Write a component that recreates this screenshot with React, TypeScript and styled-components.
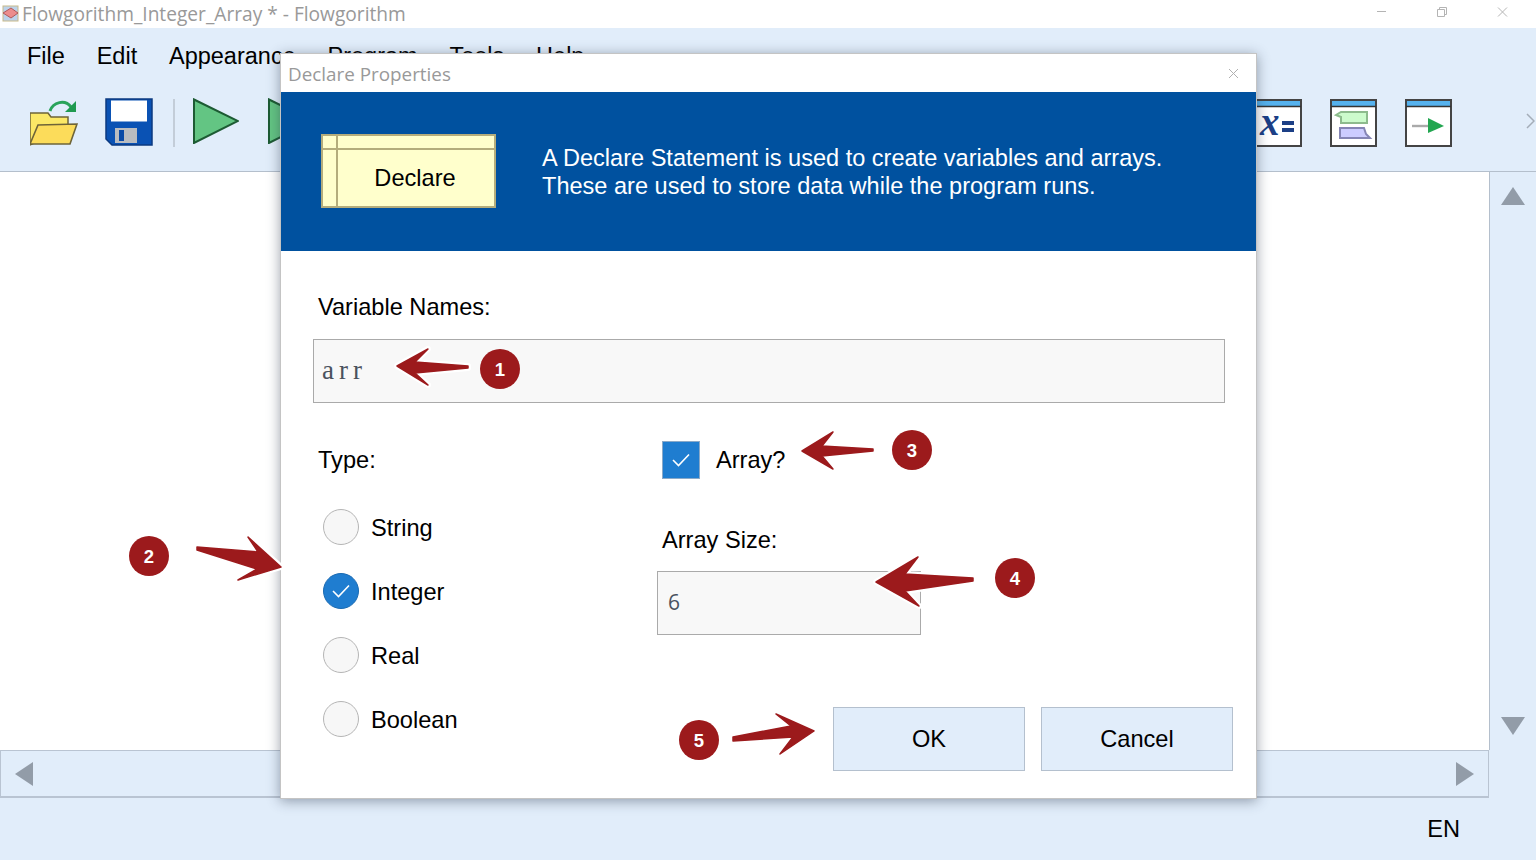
import React from "react";
import styled, { createGlobalStyle } from "styled-components";

const Global = createGlobalStyle`
  html, body { margin: 0; padding: 0; width: 1536px; height: 860px; overflow: hidden; background: #e1edfa; }
  * { box-sizing: border-box; }
  #root { width: 1536px; height: 860px; }
`;

const sans = `"Liberation Sans", Arial, sans-serif`;
const segoe = `"Open Sans", "Noto Sans", sans-serif`;

const Page = styled.div`
  position: relative; width: 1536px; height: 860px; display: flex; flex-direction: column;
  background: #e1edfa; font-family: ${sans}; color: #000; overflow: hidden;
`;
const TitleBar = styled.header`
  height: 28px; background: #fff; display: flex; align-items: center; padding-left: 2px;
`;
const AppTitle = styled.span`
  font-family: ${segoe}; font-size: 19.15px; color: #999; margin: 0 0 0 2px; white-space: nowrap;
`;
const WindowControls = styled.div`
  margin-left: auto; display: flex; align-items: center; gap: 50px; padding: 0 28px 4px 0;
`;
const MenuBar = styled.nav`
  height: 56px; display: flex; align-items: center; gap: 31.8px; padding-left: 27px;
`;
const MenuItem = styled.span`font-size: 23.5px;`;
const Toolbar = styled.div`
  height: 88px; border-bottom: 1px solid #b4bfcc; display: flex; align-items: flex-start; padding: 14px 0 0 30px;
`;
const ToolGroup = styled.div`display: flex; align-items: flex-start; gap: ${(p: { $gap: number }) => p.$gap}px;`;
const ToolDivider = styled.div`width: 2px; height: 48px; margin: 1px 18px 0 20px; background: #c3cdd8;`;
const RightTools = styled.div`margin-left: auto; display: flex; align-items: flex-start; gap: 28px; padding-top: 1px;`;
const ToolChevron = styled.div`margin: 14px 0 0 46px; padding-right: 1px;`;
const Work = styled.main`flex: 1; display: flex; min-height: 0;`;
const Canvas = styled.div`flex: 1; background: #fff;`;
const VScroll = styled.aside`
  width: 47px; border-left: 1px solid #b4bfcc; display: flex; flex-direction: column; justify-content: space-between; align-items: center; padding: 15px 0 15px;
`;
const HScroll = styled.div`
  width: 1489px; height: 48px; border: 1px solid #b9c4d2; border-width: 1px 1px 2px 1px; display: flex; align-items: center; justify-content: space-between; padding: 0 14px;
`;
const StatusBar = styled.footer`
  height: 62px; display: flex; justify-content: flex-end; align-items: center; padding: 0 76px 0 0; font-size: 23.6px;
`;

const Dialog = styled.section`
  position: absolute; left: 281px; top: 54px; width: 975px; height: 744px; background: #fff;
  box-shadow: 0 0 0 1px #c4c4c4, 0 2px 12px 1px rgba(40, 50, 70, .45);
  display: flex; flex-direction: column;
`;
const DialogTitle = styled.div`
  height: 38px; display: flex; align-items: center; justify-content: space-between; padding: 1px 17px 0 7px;
  font-family: ${segoe}; font-size: 18.85px; color: #999;
`;
const Banner = styled.div`
  height: 159px; background: #00519f; display: flex; align-items: center; padding-left: 40px; gap: 46px; color: #fff;
`;
const DeclareShape = styled.div`
  position: relative; width: 175px; height: 74px; margin-top: -1px; flex: none; background: #ffffcc; border: 2px solid #b4ad7c;
  color: #000; font-size: 23.6px; display: flex; align-items: center; justify-content: center; padding: 14px 0 0 13px;
  &::before { content: ""; position: absolute; left: 13px; top: 0; bottom: 0; width: 2px; background: #b4ad7c; }
  &::after { content: ""; position: absolute; left: 0; right: 0; top: 12px; height: 2px; background: #b4ad7c; }
`;
const BannerText = styled.p`margin: 0; font-size: 23.56px; line-height: 28px; white-space: nowrap;`;
const Form = styled.div`flex: 1; padding: 42px 0 0 32px; display: flex; flex-direction: column;`;
const FieldLabel = styled.label`display: block; font-size: 23.6px; line-height: 28px; padding-left: 5px;`;
const NamesInput = styled.div`
  width: 912px; height: 64px; margin-top: 18px; background: #f8f8f8; border: 1px solid #aaa; display: flex; align-items: center;
  padding: 0 8px 1px; font-family: "Liberation Serif", serif; font-size: 27px; letter-spacing: 5px; color: #4a525e;
`;
const Columns = styled.div`display: flex;`;
const LeftCol = styled.div`width: 344px; padding-top: 43px;`;
const RightCol = styled.div`width: 576px; padding-top: 38px;`;
const RadioRow = styled.div`height: 64px; display: flex; align-items: center; gap: 12px; padding-left: 10px; font-size: 23.6px;`;
const RadioText = styled.span`padding-top: 2px;`;
const RadioList = styled.div`margin-top: 21px;`;
const Radio = styled.span<{ $on?: boolean }>`
  width: 36px; height: 36px; border-radius: 50%; display: flex; align-items: center; justify-content: center; flex: none;
  background: ${(p) => (p.$on ? "#1f7dd0" : "#f7f7f7")}; border: 1px solid ${(p) => (p.$on ? "#1a6ab2" : "#b5b5b5")};
`;
const CheckRow = styled.div`display: flex; align-items: center; gap: 16px; padding-left: 5px; font-size: 23.6px;`;
const CheckBox = styled.span`
  width: 38px; height: 38px; background: #1f7dd0; border: 1px solid #8aa9c8; display: flex; align-items: center; justify-content: center;
`;
const SizeLabel = styled(FieldLabel)`margin-top: 47px;`;
const SizeInput = styled.div`
  width: 264px; height: 64px; margin-top: 17px; background: #f8f8f8; border: 1px solid #aaa; display: flex; align-items: center;
  padding: 0 10px 3px; font-family: ${segoe}; font-size: 21px; color: #4a525e;
`;
const Buttons = styled.div`display: flex; justify-content: flex-end; gap: 16px; margin-top: 72px;`;
const Button = styled.button`
  width: 192px; height: 64px; background: #e1edfa; border: 1px solid #b4c0ce; font-family: ${sans}; font-size: 23.6px; color: #000; padding: 0;
`;

const Arrows = styled.svg`position: absolute; left: 0; top: 0; width: 1536px; height: 860px; pointer-events: none;`;
const Badge = styled.span<{ $x: number; $y: number }>`
  position: absolute; left: ${(p) => p.$x - 20}px; top: ${(p) => p.$y - 20}px; width: 40px; height: 40px; border-radius: 50%; padding-top: 1px;
  background: #9c1a1c; color: #fff; font-weight: 700; font-size: 18.5px; display: flex; align-items: center; justify-content: center;
`;

const Glyph = styled.svg`display: block; flex: none;`;

const Check = () => (
  <Glyph width="20" height="16" viewBox="0 0 20 16" fill="none" stroke="#fff" strokeWidth="1.6">
    <path d="M2 8l5.5 5.5L18 2.5" />
  </Glyph>
);

const Triangle = ({ dir }: { dir: "up" | "down" | "left" | "right" }) => {
  const horizontal = dir === "left" || dir === "right";
  const pts = { up: "12,0 24,18 0,18", down: "0,0 24,0 12,18", left: "18,0 18,24 0,12", right: "0,0 18,12 0,24" }[dir];
  return (
    <Glyph width={horizontal ? 18 : 24} height={horizontal ? 24 : 18}>
      <polygon points={pts} fill="#929ca8" />
    </Glyph>
  );
};

const WinIcon = ({ children }: { children?: React.ReactNode }) => (
  <Glyph width="47" height="48" viewBox="0 0 47 48">
    <rect x="1" y="1" width="45" height="46" fill="#fff" stroke="#444" strokeWidth="2" />
    <rect x="2" y="2" width="43" height="5" fill="#55b2ee" />
    <line x1="1" x2="46" y1="7.5" y2="7.5" stroke="#333" strokeWidth="1.4" />
    {children}
  </Glyph>
);

const Play = () => (
  <Glyph width="46" height="46" viewBox="0 0 46 46">
    <polygon points="1,1.5 45,23 1,45" fill="#63c583" stroke="#1d5b33" strokeWidth="2" />
  </Glyph>
);

const arrowPts = [
  "397,366 428,349 415,362 468,366 468,368 415,373 428,385",
  "197,547 258,552 248,537 281,567 238,580 257,569 197,550",
  "802,451 833,432 822,446 873,449 873,451 822,456 833,469",
  "876,582 918,557 905,574 973,578 973,581 905,591 919,606",
  "733,737 791,726 776,714 814,731 780,754 793,737 733,741",
];

export default function App() {
  return (
    <Page>
      <Global />
      <TitleBar>
        <Glyph width="18" height="18" viewBox="0 0 18 18">
          <rect x="1" y="1" width="15" height="15" fill="#bcd2ea" stroke="#c8b98a" />
          <polygon points="1,8 9,3 16,8 9,13" fill="#ec8d8d" stroke="#b05a5a" />
        </Glyph>
        <AppTitle>Flowgorithm_Integer_Array * - Flowgorithm</AppTitle>
        <WindowControls>
          <Glyph width="11" height="10" stroke="#b4b4b4" fill="none"><path d="M1 4.5h9" /></Glyph>
          <Glyph width="10" height="10" stroke="#b4b4b4" fill="none"><path d="M2.5 2.5v-2h7v7h-2M.5 2.5h7v7h-7z" /></Glyph>
          <Glyph width="11" height="10" stroke="#b4b4b4" fill="none"><path d="M1 .5l9 9M10 .5l-9 9" /></Glyph>
        </WindowControls>
      </TitleBar>
      <MenuBar>
        {["File", "Edit", "Appearance", "Program", "Tools", "Help"].map((m) => (
          <MenuItem key={m}>{m}</MenuItem>
        ))}
      </MenuBar>
      <Toolbar>
        <ToolGroup $gap={27}>
          <Glyph width="48" height="48" viewBox="0 0 48 48">
            <polygon points="0,15 18,15 21,19 38,19 38,30 0,47" fill="#fbe866" stroke="#6e6438" strokeWidth="1.5" />
            <polygon points="8,27 47,26 40,46 0,46" fill="#fcdc5a" stroke="#6e6438" strokeWidth="1.6" />
            <path d="M20 13C23 4 35 1 41 9" fill="none" stroke="#29a35a" strokeWidth="3" />
            <polygon points="46,3 46,14 35,14" fill="#1f9a50" />
          </Glyph>
          <Glyph width="48" height="48" viewBox="0 0 48 48">
            <polygon points="1,1 47,1 47,47 7,47 1,41" fill="#0a52b4" stroke="#0b3a80" strokeWidth="1.5" />
            <rect x="6" y="2.5" width="36" height="21" fill="#fff" />
            <rect x="10" y="30" width="22" height="15" fill="#b9bcc0" />
            <rect x="14" y="32" width="5" height="11" fill="#0a4aa6" />
          </Glyph>
        </ToolGroup>
        <ToolDivider />
        <ToolGroup $gap={29}>
          <Play />
          <Play />
        </ToolGroup>
        <RightTools>
          <WinIcon>
            <text x="5" y="36" fontFamily="Liberation Serif, serif" fontStyle="italic" fontWeight="700" fontSize="39" fill="#1c3f86">x</text>
            <rect x="27" y="22" width="12" height="4" fill="#1c3f86" />
            <rect x="27" y="29" width="12" height="4" fill="#1c3f86" />
          </WinIcon>
          <WinIcon>
            <polygon points="11,13 37,13 37,24 11,24 11,18 6,16" fill="#ccfbcc" stroke="#8dbb8d" strokeWidth="2" />
            <polygon points="10,29 34,29 36,35 40,39 10,39" fill="#ccccff" stroke="#8585b5" strokeWidth="2" />
          </WinIcon>
          <WinIcon>
            <line x1="7" x2="24" y1="27" y2="27" stroke="#aaa" strokeWidth="2.4" />
            <polygon points="23,19 39,27 23,34" fill="#22a650" />
          </WinIcon>
          <ToolChevron>
            <Glyph width="9" height="16" fill="none" stroke="#a4adb8" strokeWidth="1.5"><path d="M1 1l7 7-7 7" /></Glyph>
          </ToolChevron>
        </RightTools>
      </Toolbar>
      <Work>
        <Canvas />
        <VScroll>
          <Triangle dir="up" />
          <Triangle dir="down" />
        </VScroll>
      </Work>
      <HScroll>
        <Triangle dir="left" />
        <Triangle dir="right" />
      </HScroll>
      <StatusBar>EN</StatusBar>

      <Dialog>
        <DialogTitle>
          Declare Properties
          <Glyph width="11" height="11" stroke="#b0b0b0" fill="none"><path d="M1 1l9 9M10 1l-9 9" /></Glyph>
        </DialogTitle>
        <Banner>
          <DeclareShape>Declare</DeclareShape>
          <BannerText>
            A Declare Statement is used to create variables and arrays.
            <br />
            These are used to store data while the program runs.
          </BannerText>
        </Banner>
        <Form>
          <FieldLabel>Variable Names:</FieldLabel>
          <NamesInput>arr</NamesInput>
          <Columns>
            <LeftCol>
              <FieldLabel>Type:</FieldLabel>
              <RadioList>
                <RadioRow><Radio /><RadioText>String</RadioText></RadioRow>
                <RadioRow><Radio $on><Check /></Radio><RadioText>Integer</RadioText></RadioRow>
                <RadioRow><Radio /><RadioText>Real</RadioText></RadioRow>
                <RadioRow><Radio /><RadioText>Boolean</RadioText></RadioRow>
              </RadioList>
            </LeftCol>
            <RightCol>
              <CheckRow><CheckBox><Check /></CheckBox>Array?</CheckRow>
              <SizeLabel>Array Size:</SizeLabel>
              <SizeInput>6</SizeInput>
              <Buttons>
                <Button>OK</Button>
                <Button>Cancel</Button>
              </Buttons>
            </RightCol>
          </Columns>
        </Form>
      </Dialog>

      <Arrows viewBox="0 0 1536 860">
        {arrowPts.map((pts) => (
          <polygon key={pts} points={pts} fill="none" stroke="#fff" strokeWidth="6" strokeLinejoin="round" />
        ))}
        {arrowPts.map((pts) => (
          <polygon key={pts} points={pts} fill="#9c1a1c" stroke="#9c1a1c" strokeWidth="1.5" strokeLinejoin="round" />
        ))}
      </Arrows>
      <Badge $x={500} $y={369}>1</Badge>
      <Badge $x={149} $y={556}>2</Badge>
      <Badge $x={912} $y={450}>3</Badge>
      <Badge $x={1015} $y={578}>4</Badge>
      <Badge $x={699} $y={740}>5</Badge>
    </Page>
  );
}
